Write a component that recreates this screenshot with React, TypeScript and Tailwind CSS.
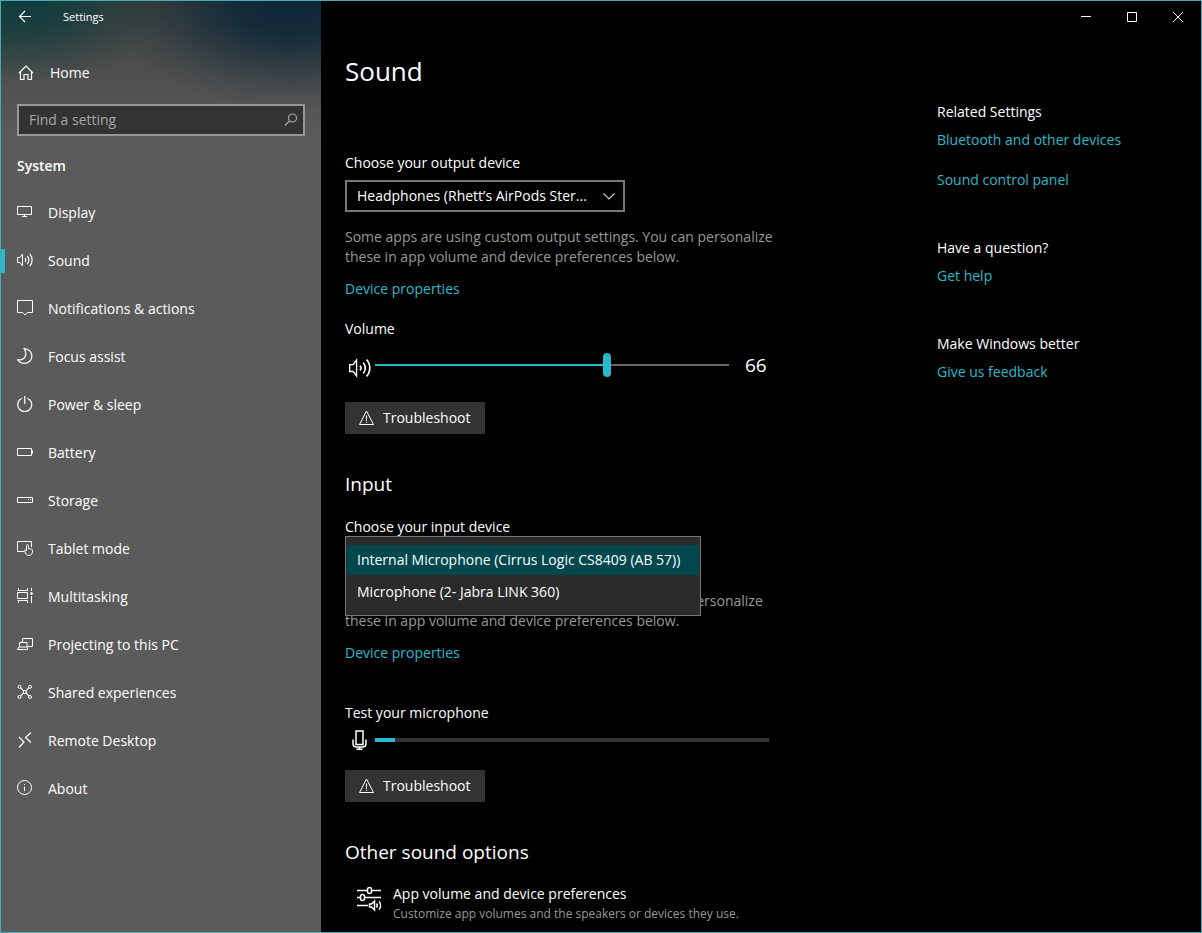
import { useState } from 'react';
import type { ReactNode } from 'react';

type IconProps = {
  children: ReactNode;
  className?: string;
  size?: number;
};

function Icon({ children, className = '', size = 16 }: IconProps) {
  return (
    <svg
      viewBox={`0 0 ${size} ${size}`}
      width={size}
      height={size}
      fill="none"
      stroke="currentColor"
      aria-hidden="true"
      className={`shrink-0 ${className}`}
    >
      {children}
    </svg>
  );
}

const speaker = (
  <>
    <path d="M.5 5.5H3L5.5 2.2v11.6L3 10.5H.5z" />
    <path strokeWidth="1.2" d="M8 6.2c.8 1 .8 2.6 0 3.6M10.3 4c2 2.2 2 5.8 0 8M12.7 1.8c3.2 3.4 3.2 9 0 12.4" />
  </>
);

const navItems = [
  {
    label: 'Display',
    icon: <path d="M.5 2.5h14v8H.5zM7.5 10.5v2M5 12.5h5" />,
  },
  { label: 'Sound', icon: speaker },
  {
    label: 'Notifications & actions',
    icon: <path d="M.5.5h15v12h-5L8 15l-2.5-2.5h-5z" />,
  },
  {
    label: 'Focus assist',
    icon: (
      <path
        strokeWidth="1.2"
        d="M7.2.7C11.8.8 14.9 4 14.9 8c0 4.3-3.3 7.3-7.4 7.3-2.9 0-5.2-1.3-6.7-3.5 5 .7 8-2.3 8-6 0-2-.6-3.6-1.6-5.1z"
      />
    ),
  },
  {
    label: 'Power & sleep',
    icon: <path strokeWidth="1.2" d="M5 2.2a7 7 0 1 0 5.5 0M7.75 0v8" />,
  },
  {
    label: 'Battery',
    icon: <path d="M.5 4.5h14v7H.5zM15.5 6.5v3" />,
  },
  {
    label: 'Storage',
    icon: <path d="M.5 5.5h15v5H.5zM11 7.5h1M13 7.5h1" />,
  },
  {
    label: 'Tablet mode',
    icon: (
      <>
        <path d="M7 11.5H.5v-10h14V7" />
        <path d="M9.500 11V5.500c0-1.300 2-1.300 2 0V8.500l3 .7c.8.200 1 .7 1 1.500 0 2.800-1 4.800-3.500 4.800-2 0-2.900-1-3.600-2.500L7.300 10.500c.7-.8 1.500-.4 2.200.5z" />
      </>
    ),
  },
  {
    label: 'Multitasking',
    icon: (
      <>
        <path d="M1.500 0v2.500h9V0M.5 4.500h10v6H.5zM1.500 15v-2.500h9V15M.5 2.500h1M.5 12.500h1M14.500 0v3M14.500 8v7" />
        <circle cx="14.5" cy="5.5" r="1" fill="currentColor" />
      </>
    ),
  },
  {
    label: 'Projecting to this PC',
    icon: <path d="M5.5 6V2.500h10v8H11M2.500 11V6.500h7.500V11M.5 13.500l1.500-2.500h8.500v2.500z" />,
  },
  {
    label: 'Shared experiences',
    icon: (
      <>
        <circle cx="2.5" cy="2.8" r="1.5" />
        <circle cx="13" cy="2.8" r="1.5" />
        <circle cx="2.5" cy="13" r="1.5" />
        <circle cx="13" cy="13" r="1.5" />
        <circle cx="7.75" cy="8" r="1.5" />
        <path strokeWidth="1.2" d="m3.6 3.9 3 3M11.900 3.900l-3 3M3.600 11.900l3-3M11.900 11.900l-3-3" />
      </>
    ),
  },
  {
    label: 'Remote Desktop',
    icon: <path strokeWidth="1.2" d="m2 5 5 5-5 5.500M14 .5 8.500 5.500 14 10.500" />,
  },
  {
    label: 'About',
    icon: (
      <>
        <circle cx="7.5" cy="7.5" r="7" />
        <path d="M7.5 6.500V11M7.500 4v1" />
      </>
    ),
  },
];

function Sidebar() {
  return (
    <aside className="w-80 shrink-0 bg-[#5b5b5b] bg-[radial-gradient(ellipse_150px_85px_at_20px_0px,#0f3d3d,#0f3d3dcc_30%,#0f3d3d66_60%,#0f3d3d1a_85%,transparent),radial-gradient(ellipse_180px_110px_at_290px_0px,#0e2838,#0e2838e6_30%,#0e283880_55%,#0e283826_80%,transparent),linear-gradient(to_bottom,#3a3e3c_0px,#4b4c4b_60px,#5b5b5b_140px)] pb-6">
      <div className="flex h-8 items-center">
        <button type="button" aria-label="Back" className="flex h-8 w-12 items-center justify-center">
          <Icon>
            <path strokeWidth="1.2" d="M14 7.5H2.500M8 2 2.500 7.500 8 13" />
          </Icon>
        </button>
        <span className="ml-3.5 text-[11px]">Settings</span>
      </div>

      <a href="#home" className="mt-4 flex h-12 items-center gap-4 pl-[17px]">
        <Icon>
          <path strokeWidth="1.2" d="m1 8 7-7 7 7M2.500 6.500v8H6v-5h4v5h3.500v-8" />
        </Icon>
        Home
      </a>

      <div className="relative mx-4 mt-[7px]">
        <input
          type="text"
          aria-label="Find a setting"
          placeholder="Find a setting"
          className="h-8 w-full border-2 border-[#999999] bg-[#333333] pr-8 pb-0.5 pl-2.5 text-sm placeholder:text-[#a6a6a6] focus:outline-none"
        />
        <Icon className="absolute top-2 right-1.5 text-[#a6a6a6]">
          <circle cx="9.5" cy="6" r="4" strokeWidth="1.2" />
          <path strokeWidth="1.2" d="M6.500 9 2 13.500" />
        </Icon>
      </div>

      <h2 className="mt-5 pl-4 leading-5 font-semibold">System</h2>

      <nav className="mt-[13px]">
        {navItems.map((item) => (
          <a
            key={item.label}
            href={`#${item.label.toLowerCase().replace(/\W+/g, '-')}`}
            aria-current={item.label === 'Sound' ? 'page' : undefined}
            className="group relative flex h-12 items-center gap-[15px] pl-4"
          >
            <span className="absolute left-0 hidden h-6 w-1 bg-[#29b9cc] group-aria-[current=page]:block" />
            <Icon className="mb-0.5">{item.icon}</Icon>
            {item.label}
          </a>
        ))}
      </nav>
    </aside>
  );
}

function WindowControls() {
  return (
    <div className="flex h-8 justify-end">
      <button type="button" aria-label="Minimize" className="flex w-[46px] items-center justify-center">
        <Icon size={10}>
          <path d="M0 4.5h10" />
        </Icon>
      </button>
      <button type="button" aria-label="Maximize" className="flex w-[46px] items-center justify-center">
        <Icon size={10}>
          <path d="M.5.5h9v9h-9z" />
        </Icon>
      </button>
      <button type="button" aria-label="Close" className="flex w-[46px] items-center justify-center">
        <Icon size={10}>
          <path d="m0 0 10 10M10 0 0 10" />
        </Icon>
      </button>
    </div>
  );
}

function TroubleshootButton() {
  return (
    <button type="button" className="mt-[19px] flex h-8 items-center gap-2 self-start bg-[#333333] px-3.5">
      <Icon>
        <path d="M7.5 1 14.500 14.500H.5z" />
        <path d="M7.5 5.500V11M7.500 12v1" />
      </Icon>
      Troubleshoot
    </button>
  );
}

function DeviceSelect({ id, options }: { id: string; options: string[] }) {
  return (
    <div className="relative mt-[7px] w-[280px]">
      <select
        id={id}
        className="block h-8 w-full appearance-none truncate border-2 border-[#767676] bg-black pr-8 pl-2.5 text-sm"
      >
        {options.map((option) => (
          <option key={option}>{option}</option>
        ))}
      </select>
      <Icon className="pointer-events-none absolute top-2 right-2 text-[#cccccc]">
        <path strokeWidth="1.2" d="m2.5 5.500 5.500 5.500 5.500-5.500" />
      </Icon>
    </div>
  );
}

function CustomSettingsNote({ kind }: { kind: string }) {
  return (
    <>
      <p className="mt-[15px] text-[#999999]">
        {`Some apps are using custom ${kind} settings. You can personalize these in app volume and device preferences below.`}
      </p>
      <a href={`#${kind}-properties`} className="mt-3 self-start text-[#29b9cc]">
        Device properties
      </a>
    </>
  );
}

const microphones = ['Internal Microphone (Cirrus Logic CS8409 (AB 57))', 'Microphone (2- Jabra LINK 360)'];

const relatedLinks = [
  { title: 'Related Settings', links: ['Bluetooth and other devices', 'Sound control panel'] },
  { title: 'Have a question?', links: ['Get help'] },
  { title: 'Make Windows better', links: ['Give us feedback'] },
];

export default function App() {
  const [volume, setVolume] = useState(66);
  const [selectedMic, setSelectedMic] = useState(microphones[0]);
  const micLevel = 5;

  return (
    <div className="flex min-h-screen border border-[#4aa9b5] bg-black font-['Open_Sans','Noto_Sans',sans-serif] text-sm leading-5 text-white">
      <Sidebar />

      <main className="min-w-0 flex-1">
        <WindowControls />

        <div className="grid grid-cols-[minmax(0,592px)_1fr] pl-6">
          <div className="flex max-w-[440px] flex-col">
            <h1 className="mt-[18px] text-[26px] leading-10">Sound</h1>

            <label htmlFor="output-device" className="mt-[62px]">
              Choose your output device
            </label>
            <DeviceSelect id="output-device" options={['Headphones (Rhett’s AirPods Ster...']} />
            <CustomSettingsNote kind="output" />

            <label htmlFor="volume" className="mt-5">
              Volume
            </label>
            <div className="mt-2 flex h-9 items-center">
              <svg
                viewBox="0 0 16 16"
                width="22"
                height="22"
                fill="none"
                stroke="currentColor"
                aria-hidden="true"
                className="mt-1.5 mr-1 ml-1 shrink-0"
              >
                {speaker}
              </svg>
              <input
                id="volume"
                type="range"
                value={volume}
                onChange={(e) => setVolume(Number(e.target.value))}
                style={{ backgroundImage: `linear-gradient(to right, #29b9cc ${volume}%, #666666 ${volume}%)` }}
                className="h-6 w-[354px] appearance-none bg-[length:100%_2px] bg-center bg-no-repeat [&::-webkit-slider-thumb]:h-6 [&::-webkit-slider-thumb]:w-2 [&::-webkit-slider-thumb]:appearance-none [&::-webkit-slider-thumb]:rounded-full [&::-webkit-slider-thumb]:bg-[#29b9cc]"
              />
              <output htmlFor="volume" className="ml-4 text-[19px]">
                {volume}
              </output>
            </div>
            <TroubleshootButton />

            <h2 className="mt-[38px] text-[19px] leading-6">Input</h2>
            <div className="relative mt-[21px] flex flex-col">
              <label htmlFor="input-device">Choose your input device</label>
              <DeviceSelect id="input-device" options={microphones} />
              <ul
                role="listbox"
                aria-label="Input devices"
                className="absolute top-[19px] left-0 flex min-w-[356px] flex-col gap-0.5 border border-[#767676] bg-[#2b2b2b] px-px py-2 whitespace-nowrap"
              >
                {microphones.map((mic) => (
                  <li
                    key={mic}
                    role="option"
                    aria-selected={mic === selectedMic}
                    onClick={() => setSelectedMic(mic)}
                    className="px-2.5 py-[5px] aria-selected:bg-[#00474e]"
                  >
                    {mic}
                  </li>
                ))}
              </ul>
            </div>
            <CustomSettingsNote kind="input" />

            <span id="mic-label" className="mt-10">
              Test your microphone
            </span>
            <div className="mt-1.5 flex h-[22px] items-center">
              <Icon size={20} className="mr-1.5 ml-1">
                <path
                  strokeWidth="1.5"
                  d="M7 1h7v13.500H7zM4 9.500v4c0 2.300 1.200 3.500 3.500 3.500h6c2.300 0 3.500-1.200 3.500-3.500v-4M10.500 17v2M7.500 19.250h6"
                />
              </Icon>
              <div
                role="meter"
                aria-labelledby="mic-label"
                aria-valuenow={micLevel}
                className="h-1 w-[394px] bg-[#333333]"
              >
                <div className="h-1 bg-[#29b9cc]" style={{ width: `${micLevel}%` }} />
              </div>
            </div>
            <TroubleshootButton />

            <h2 className="mt-[38px] text-[19px] leading-6">Other sound options</h2>
            <a href="#app-volume" className="mt-5 flex items-start gap-2.5 pl-3">
              <Icon size={26} className="mt-0.5">
                <path strokeWidth="1.5" d="M0 4.500h10M15 4.500h9M0 11.500h3M8 11.500h16M0 19.500h11" />
                <rect x="10.5" y="1.500" width="4" height="6" rx="2" strokeWidth="1.5" />
                <rect x="3.5" y="8.500" width="4" height="6" rx="2" strokeWidth="1.5" />
                <path strokeWidth="1.5" d="M12.500 18h2l3-3v9l-3-3h-2z" />
                <path strokeWidth="1.5" d="M19.500 17.500c1 1.200 1 2.800 0 4M22 15.500c2 2.300 2 5.700 0 8" />
              </Icon>
              <span className="flex flex-col">
                <span>App volume and device preferences</span>
                <span className="text-xs leading-5 text-[#999999]">
                  Customize app volumes and the speakers or devices they use.
                </span>
              </span>
            </a>
          </div>

          <aside className="mt-[69px] flex flex-col gap-12">
            {relatedLinks.map((group) => (
              <section key={group.title}>
                <h3>{group.title}</h3>
                <div className="mt-2 flex flex-col items-start gap-5">
                  {group.links.map((link) => (
                    <a key={link} href={`#${link.toLowerCase().replace(/\W+/g, '-')}`} className="text-[#29b9cc]">
                      {link}
                    </a>
                  ))}
                </div>
              </section>
            ))}
          </aside>
        </div>
      </main>
    </div>
  );
}
